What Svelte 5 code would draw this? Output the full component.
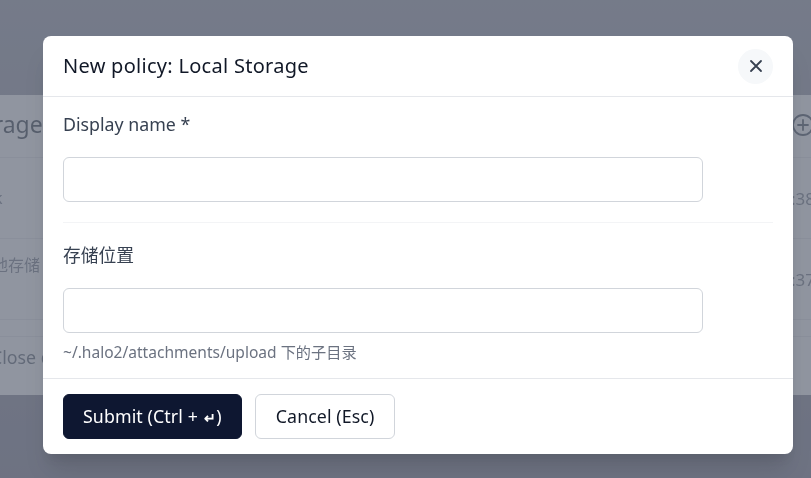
<script>
  let name = $state('');
  let location = $state('');
</script>

<div class="page">
  <section class="card">
    <div class="card-head">
      <span class="card-title">Local Storage</span>
      <svg class="add" viewBox="0 0 24 24" fill="none" stroke="currentColor" stroke-width="1.8" stroke-linecap="round"><circle cx="12" cy="12" r="10"/><path d="M12 7v10M7 12h10"/></svg>
    </div>
    <div class="row first"><span class="l">k</span><span class="r">12:38</span></div>
    <div class="row second"><span class="l">本地存储<br />地</span><span class="r">12:37</span></div>
    <div class="card-gap"></div>
    <div class="card-foot"><span class="close">Close dialog</span></div>
  </section>
</div>

<div class="overlay"></div>

<div class="modal">
  <header class="m-head">
    <h2>New policy: Local Storage</h2>
    <button class="x" aria-label="Close">
      <svg viewBox="0 0 24 24" width="20" height="20" fill="none" stroke="currentColor" stroke-width="2.2" stroke-linecap="round"><path d="M6 6l12 12M18 6L6 18"/></svg>
    </button>
  </header>
  <div class="m-body">
    <div class="field">
      <label for="dn">Display name *</label>
      <input id="dn" bind:value={name} />
    </div>
    <div class="sep"></div>
    <div class="field second-field">
      <label for="loc">存储位置</label>
      <input id="loc" bind:value={location} />
      <p class="help">~/.halo2/attachments/upload <span class="cjk">下的子目录</span></p>
    </div>
  </div>
  <footer class="m-foot">
    <button class="btn primary">Submit (Ctrl + <span class="enter">↵</span>)</button>
    <button class="btn">Cancel (Esc)</button>
  </footer>
</div>

<style>
  :global(body) {
    margin: 0;
    font-family: "Noto Sans", "Noto Sans CJK SC", sans-serif;
    overflow: hidden;
  }
  .page {
    width: 811px;
    height: 478px;
    background: linear-gradient(#9396a4, #777688);
    padding-top: 95px;
    box-sizing: border-box;
    overflow: hidden;
  }
  .card {
    height: 300px;
    background: #fff;
    display: flex;
    flex-direction: column;
    color: #374151;
    font-size: 16px;
    filter: blur(0.5px);
  }
  .card-head {
    height: 63px;
    flex: none;
    box-sizing: border-box;
    display: flex;
    align-items: center;
    justify-content: space-between;
    border-bottom: 1px solid #e5e7eb;
    padding-bottom: 2px;
  }
  .card-title {
    font-size: 23px;
    color: #1f2937;
    margin-left: -103px;
    margin-top: -2px;
  }
  .add { width: 24px; height: 24px; margin-right: -4px; color: #374151; }
  .row {
    height: 81px;
    flex: none;
    box-sizing: border-box;
    display: flex;
    justify-content: space-between;
    align-items: center;
    border-bottom: 1px solid #e5e7eb;
    color: #6b7280;
  }
  .row.second { height: 81px; }
  .row .r { margin-right: -4px; font-size: 17px; }
  .row .l { margin-left: -24px; line-height: 27px; }
  .row.first .l { margin-left: -6px; }
  .card-gap { height: 16px; flex: none; border-bottom: 1px solid #e5e7eb; }
  .card-foot { padding-top: 8px; }
  .close { margin-left: -9px; font-size: 17.78px; color: #4b5563; }

  .overlay {
    position: fixed;
    inset: 0;
    background: rgba(107, 114, 128, 0.75);
  }
  .modal {
    position: fixed;
    left: 43px;
    top: 36px;
    width: 750px;
    height: 418px;
    background: #fff;
    border-radius: 8px;
    box-shadow: 0 20px 25px -5px rgba(0, 0, 0, 0.12), 0 10px 10px -5px rgba(0, 0, 0, 0.06);
    display: flex;
    flex-direction: column;
    box-sizing: border-box;
  }
  .m-head {
    height: 61px;
    flex: none;
    box-sizing: border-box;
    border-bottom: 1px solid #e5e7eb;
    display: flex;
    align-items: center;
    justify-content: space-between;
    padding: 0 20px;
  }
  h2 {
    margin: 0 0 2px;
    font-size: 20px;
    font-weight: 400;
    letter-spacing: 0.28px;
    color: #111827;
  }
  .x {
    width: 35px;
    height: 35px;
    border: 0;
    padding: 0;
    border-radius: 50%;
    background: #f6f8fa;
    color: #374151;
    display: flex;
    align-items: center;
    justify-content: center;
  }
  .m-body {
    flex: 1;
    padding: 0 20px;
  }
  .field {
    display: flex;
    flex-direction: column;
    align-items: flex-start;
  }
  label {
    font-size: 17.78px;
    line-height: 24px;
    color: #374151;
    margin-top: 15px;
    margin-bottom: 21px;
  }
  input {
    width: 640px;
    height: 45px;
    box-sizing: border-box;
    border: 1px solid #d1d5db;
    border-radius: 6px;
    background: #fff;
    outline: none;
  }
  .sep {
    height: 1px;
    background: #f3f4f6;
    margin-top: 20px;
  }
  .second-field label { margin-top: 20px; margin-bottom: 21px; }
  .help {
    margin: 9px 0 0;
    font-size: 15.55px;
    line-height: 20px;
    color: #6b7280;
  }
  .cjk { font-size: 15.2px; }
  .m-foot {
    flex: none;
    height: 76px;
    box-sizing: border-box;
    border-top: 1px solid #e5e7eb;
    display: flex;
    align-items: flex-start;
    gap: 13px;
    padding: 15px 20px 0;
  }
  .btn {
    height: 45px;
    padding: 0 20px 2px;
    font: inherit;
    font-size: 17.78px;
    letter-spacing: 0.1px;
    border: 1px solid #d1d5db;
    border-radius: 6px;
    background: #fff;
    color: #111827;
  }
  .btn.primary {
    padding: 0 19px 2px;
    background: #0e1731;
    border-color: #0e1731;
    color: #fff;
  }
  .enter { font-size: 14px; font-weight: 700; margin-left: 1.5px; }
</style>
